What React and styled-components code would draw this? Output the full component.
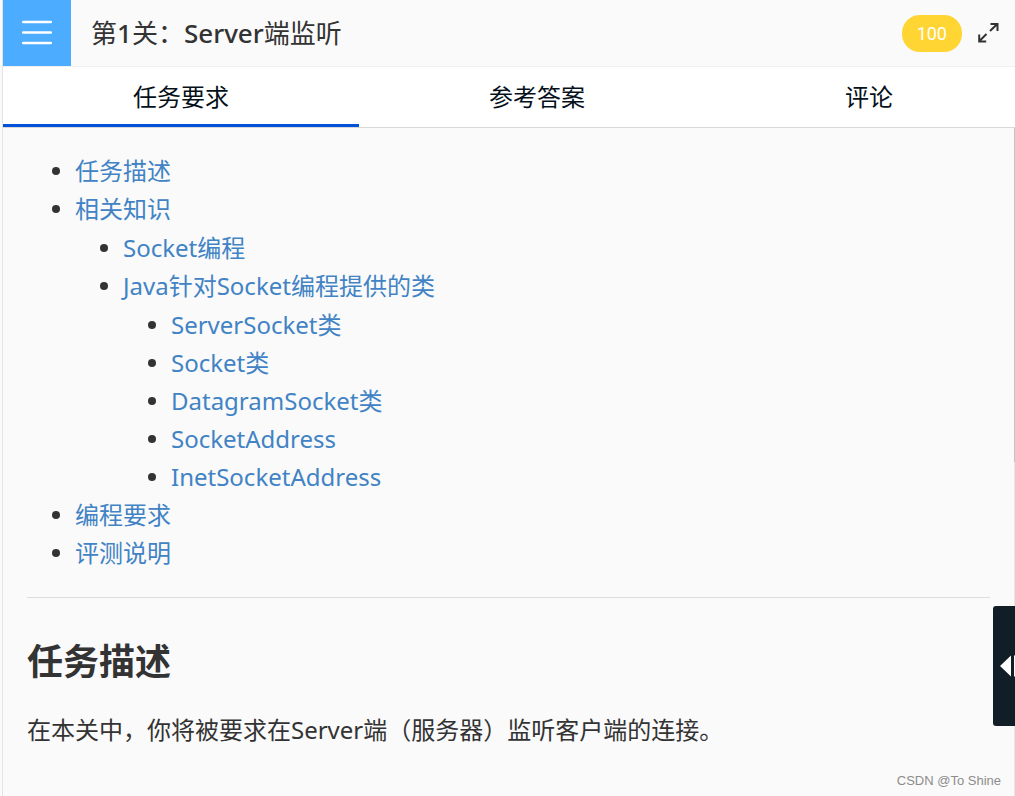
import React from "react";
import styled, { createGlobalStyle } from "styled-components";

const GlobalStyle = createGlobalStyle`
  * { box-sizing: border-box; }
  html, body { margin: 0; background: #fafafa; }
  body {
    font-family: "Noto Sans", "Noto Sans CJK SC", sans-serif;
    font-size: 24px;
    color: #333;
  }
`;

const Page = styled.div`
  position: relative;
  display: flex;
  flex-direction: column;
  min-height: 100vh;
  overflow: hidden;
  padding-left: 2px;
`;

const Panel = styled.div`
  flex: 1;
  display: flex;
  flex-direction: column;
  border-left: 1px solid #e4e4e4;
`;

const Header = styled.header`
  display: flex;
  align-items: center;
  height: 67px;
  padding-right: 16px;
  border-bottom: 1px solid #f0f0f0;
`;

const MenuButton = styled.button`
  display: flex;
  align-items: center;
  justify-content: center;
  align-self: stretch;
  width: 68px;
  padding: 0;
  border: 0;
  background: #4cacff;
  color: #fff;
`;

const Title = styled.h1`
  flex: 1;
  margin: 0 0 0 20px;
  font-size: 26px;
  line-height: 40px;
  font-weight: 400;
`;

const TitleLatin = styled.span`
  font-weight: 500;
`;

const Score = styled.span`
  padding: 0 15px;
  border-radius: 18px;
  background: #ffd534;
  color: #fff;
  font-family: Roboto, sans-serif;
  font-size: 18px;
  line-height: 37px;
`;

const IconButton = styled.button`
  display: flex;
  margin-left: 16px;
  padding: 0;
  border: 0;
  background: none;
  color: #333;
`;

const Tabs = styled.nav`
  display: grid;
  grid-template-columns: 356fr 356fr 300fr;
  height: 61px;
  background: #fff;
  border-bottom: 1px solid #d8d8d8;
`;

const Tab = styled.a`
  padding-left: 130px;
  box-shadow: ${(p) => (p.$active ? "inset 0 -3px #0152d9" : "none")};
  color: #05101a;
  line-height: 60px;
  text-decoration: none;
  white-space: nowrap;
`;

const Content = styled.main`
  position: relative;
  flex: 1;
  padding: 24px;
  border-right: 1px solid #e6e6e6;
`;

const ScrollThumb = styled.div`
  position: absolute;
  top: 0;
  right: -1px;
  width: 1px;
  height: 50%;
  background: #c4c4c4;
`;

const List = styled.ul`
  margin: 0;
  padding: ${(p) => (p.$nested ? "1px 0 0 48px" : "0 0 0 48px")};
  line-height: 38px;
  list-style: none;
`;

const Item = styled.li`
  position: relative;

  &::before {
    content: "";
    position: absolute;
    top: 15px;
    left: -23px;
    width: 8px;
    height: 8px;
    border-radius: 50%;
    background: #333;
  }
`;

const TocLink = styled.a`
  color: #4183c4;
  text-decoration: none;
`;

const Divider = styled.hr`
  margin: 25px 0 36px;
  border: 0;
  border-top: 1px solid #ddd;
`;

const Heading = styled.h2`
  margin: 0 0 21px;
  font-size: 36px;
  line-height: 56px;
  font-weight: 700;
`;

const Text = styled.p`
  margin: 0;
  line-height: 38px;
`;

const Drawer = styled.button`
  position: absolute;
  top: 606px;
  right: 0;
  display: flex;
  align-items: center;
  justify-content: flex-end;
  width: 22px;
  height: 120px;
  padding: 0;
  border: 0;
  border-radius: 3px 0 0 3px;
  background: #121e27;
`;

const Watermark = styled.div`
  position: absolute;
  right: 14px;
  bottom: 6px;
  color: #8c8c8c;
  font-family: "Liberation Sans", sans-serif;
  font-size: 13px;
  line-height: 18px;
`;

const toc = [
  { label: "任务描述" },
  {
    label: "相关知识",
    children: [
      { label: "Socket编程" },
      {
        label: "Java针对Socket编程提供的类",
        children: [
          { label: "ServerSocket类" },
          { label: "Socket类" },
          { label: "DatagramSocket类" },
          { label: "SocketAddress" },
          { label: "InetSocketAddress" },
        ],
      },
    ],
  },
  { label: "编程要求" },
  { label: "评测说明" },
];

function Toc({ items, nested }) {
  return (
    <List $nested={nested}>
      {items.map((item) => (
        <Item key={item.label}>
          <TocLink href={`#${item.label}`}>{item.label}</TocLink>
          {item.children && <Toc items={item.children} nested />}
        </Item>
      ))}
    </List>
  );
}

export default function App() {
  return (
    <Page>
      <GlobalStyle />
      <Panel>
        <Header>
          <MenuButton aria-label="菜单">
            <svg width="30" height="26" viewBox="0 0 30 26" stroke="currentColor" strokeWidth="2.6" strokeLinecap="round">
              <path d="M1.2 2h27.6M1.2 12.5h27.6M1.2 23h27.6" />
            </svg>
          </MenuButton>
          <Title>
            第<TitleLatin>1</TitleLatin>关：<TitleLatin>Server</TitleLatin>端监听
          </Title>
          <Score>100</Score>
          <IconButton aria-label="全屏">
            <svg width="21" height="20" viewBox="0 0 21 20" fill="none" stroke="currentColor" strokeWidth="2">
              <path d="M12 8L19 1.2M12.5 1H19.5V8M8.5 11L1.7 17.8M1.2 11.5v7h7" />
            </svg>
          </IconButton>
        </Header>
        <Tabs>
          <Tab href="#task" $active>任务要求</Tab>
          <Tab href="#answer">参考答案</Tab>
          <Tab href="#comment">评论</Tab>
        </Tabs>
        <Content>
          <ScrollThumb />
          <Toc items={toc} />
          <Divider />
          <Heading>任务描述</Heading>
          <Text>在本关中，你将被要求在Server端（服务器）监听客户端的连接。</Text>
        </Content>
      </Panel>
      <Drawer aria-label="展开侧栏">
        <svg width="15" height="22" viewBox="0 0 15 22" fill="#fff">
          <path d="M0 11L11 0.5V21.5ZM14 0.5h1v21h-1z" />
        </svg>
      </Drawer>
      <Watermark>CSDN @To Shine</Watermark>
    </Page>
  );
}
